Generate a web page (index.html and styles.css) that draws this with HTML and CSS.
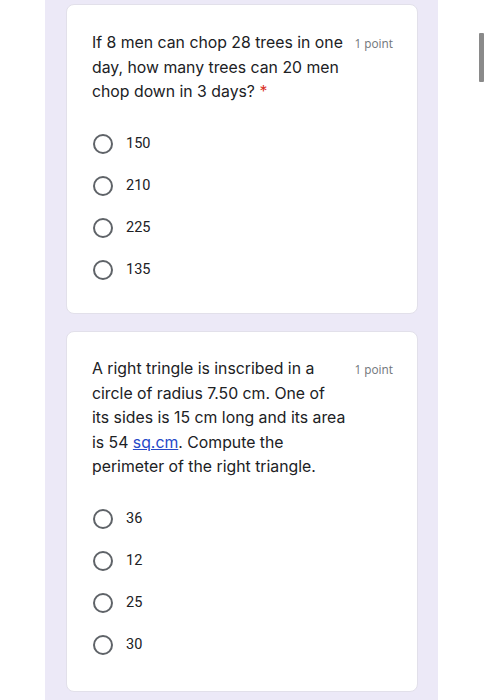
FILE: index.html
```html
<!DOCTYPE html>
<html>
<head>
<meta charset="utf-8">
<link rel="stylesheet" href="styles.css">
</head>
<body>
<div class="page">
  <div class="form">
    <div class="card card-1">
      <div class="head">
        <div class="question">If 8 men can chop 28 trees in one<br>day, how many trees can 20 men<br>chop down in 3 days? <span class="req">*</span></div>
        <div class="points">1 point</div>
      </div>
      <div class="options">
        <div class="option"><span class="radio"></span><span class="label">150</span></div>
        <div class="option"><span class="radio"></span><span class="label">210</span></div>
        <div class="option"><span class="radio"></span><span class="label">225</span></div>
        <div class="option"><span class="radio"></span><span class="label">135</span></div>
      </div>
    </div>
    <div class="card card-2">
      <div class="head">
        <div class="question">A right tringle is inscribed in a<br>circle of radius 7.50 cm. One of<br>its sides is 15 cm long and its area<br>is 54 <a class="link" href="#">sq.cm</a>. Compute the<br>perimeter of the right triangle.</div>
        <div class="points">1 point</div>
      </div>
      <div class="options">
        <div class="option"><span class="radio"></span><span class="label">36</span></div>
        <div class="option"><span class="radio"></span><span class="label">12</span></div>
        <div class="option"><span class="radio"></span><span class="label">25</span></div>
        <div class="option"><span class="radio"></span><span class="label">30</span></div>
      </div>
    </div>
  </div>
</div>
<div class="scrollbar"></div>
</body>
</html>
```
FILE: styles.css
```css
html, body {
  margin: 0;
  padding: 0;
  background: #ffffff;
}
body {
  width: 488px;
  height: 700px;
  overflow: hidden;
  position: relative;
  font-family: Inter, "Open Sans", "Liberation Sans", sans-serif;
  color: #202124;
}
.page {
  padding-left: 45px;
}
.form {
  width: 393px;
  height: 700px;
  background: #ece9f7;
  box-sizing: border-box;
  padding: 4px 20px 0 21px;
  display: flex;
  flex-direction: column;
  gap: 17px;
}
.card {
  background: #ffffff;
  border: 1px solid #e2e0ea;
  border-radius: 8px;
  box-sizing: border-box;
  padding: 26px 24px 0 25px;
}
.card-1 { height: 310px; }
.card-2 { height: 361px; padding-top: 25px; }
.head {
  display: flex;
  align-items: flex-start;
  justify-content: space-between;
}
.question {
  width: 262px;
  white-space: nowrap;
  font-size: 15.8px;
  line-height: 24.6px;
  letter-spacing: 0;
}
.req {
  color: #d93025;
}
.link {
  color: #2549c8;
  text-decoration: underline;
}
.points {
  font-family: "Open Sans", "Liberation Sans", sans-serif;
  font-size: 11.8px;
  color: #70757a;
  line-height: 24.6px;
  white-space: nowrap;
}
.options {
  margin-top: 18px;
  display: flex;
  flex-direction: column;
}
.option {
  height: 42px;
  display: flex;
  align-items: center;
}
.radio {
  width: 20px;
  height: 20px;
  box-sizing: border-box;
  border: 2px solid #5f6368;
  border-radius: 50%;
  margin-left: 1px;
}
.label {
  margin-left: 13px;
  font-family: Roboto, "Liberation Sans", sans-serif;
  font-size: 14.5px;
  color: #202124;
}
.scrollbar {
  position: absolute;
  left: 479px;
  top: 33px;
  width: 5px;
  height: 49px;
  background: #8a8a8a;
  border-radius: 1px;
}
```
